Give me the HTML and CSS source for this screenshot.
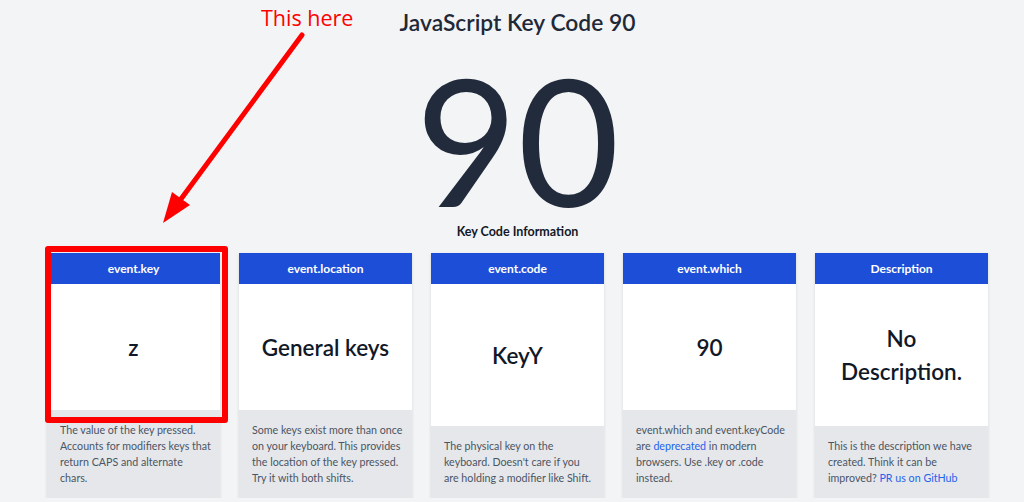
FILE: index.html
```html
<!DOCTYPE html>
<html lang="en">
<head>
  <meta charset="UTF-8" />
  <meta name="viewport" content="width=device-width, initial-scale=1" />
  <title>JavaScript Key Code 90</title>
  <link rel="stylesheet" href="styles.css">
</head>
<body>

<div class="page">
  <h1 class="title">JavaScript Key Code 90</h1>
  <div class="keycode">90</div>
  <h2 class="info-title">Key Code Information</h2>

  <div class="cards">
    <div class="card">
      <div class="card-head">event.key</div>
      <div class="card-value">z</div>
      <div class="card-desc">The value of the key pressed. Accounts for modifiers keys that return CAPS and alternate chars.</div>
    </div>
    <div class="card">
      <div class="card-head">event.location</div>
      <div class="card-value">General keys</div>
      <div class="card-desc">Some keys exist more than once on your keyboard. This provides the location of the key pressed. Try it with both shifts.</div>
    </div>
    <div class="card">
      <div class="card-head">event.code</div>
      <div class="card-value">KeyY</div>
      <div class="card-desc">The physical key on the keyboard. Doesn't care if you are holding a modifier like Shift.</div>
    </div>
    <div class="card">
      <div class="card-head">event.which</div>
      <div class="card-value">90</div>
      <div class="card-desc">event.which and event.keyCode are <a href="#">deprecated</a> in modern browsers. Use .key or .code instead.</div>
    </div>
    <div class="card">
      <div class="card-head">Description</div>
      <div class="card-value">No Description.</div>
      <div class="card-desc">This is the description we have created. Think it can be improved? <a href="#">PR us on GitHub</a></div>
    </div>
  </div>
</div>

<!-- screenshot annotation -->
<div class="note">This here</div>
<svg class="arrow" width="160" height="230" viewBox="0 0 160 230">
  <line x1="142" y1="35" x2="21" y2="199" stroke="#ff0000" stroke-width="5" stroke-linecap="round" />
  <polygon points="3,223 12,192 30,205" fill="#ff0000" />
</svg>
<div class="mark"></div>

</body>
</html>
```

FILE: styles.css
```css
body {
  margin: 0;
  background: #f3f4f6;
  color: #1f2937;
  font-family: Lato, "Open Sans", sans-serif;
  position: relative;
}

.page {
  width: 941px;
  margin-left: 47px;
  text-align: center;
}

.title {
  margin: 0;
  padding-top: 8px;
  font-size: 22.8px;
  font-weight: 600;
  line-height: 28px;
}

.keycode {
  font-size: 176px;
  font-weight: 400;
  line-height: 170px;
  color: #222b3b;
  margin-top: 18px;
}

.info-title {
  margin: 0;
  font-size: 12.5px;
  font-weight: 700;
  line-height: 16px;
  color: #111827;
}

.cards {
  display: grid;
  grid-template-columns: repeat(5, 173px);
  column-gap: 19px;
  margin-top: 13px;
}

.card {
  display: flex;
  flex-direction: column;
  background: #fff;
  box-shadow: 0 1px 3px rgba(0, 0, 0, 0.12);
}

.card-head {
  background: #1d4ed8;
  color: #fff;
  font-size: 12px;
  font-weight: 700;
  height: 31px;
  line-height: 31px;
}

.card-value {
  flex: 1;
  min-height: 126px;
  display: flex;
  align-items: center;
  justify-content: center;
  padding: 0 14px;
  font-size: 22.5px;
  font-weight: 600;
  line-height: 33px;
  color: #111827;
}

.card-desc {
  background: #e5e7eb;
  padding: 12px 8px 12px 13px;
  text-align: left;
  font-size: 10.7px;
  line-height: 16px;
  color: #4b5563;
}

.card-desc a {
  color: #2563eb;
  text-decoration: none;
}

.note {
  position: absolute;
  left: 261px;
  top: 3px;
  font-family: "Open Sans", sans-serif;
  font-size: 21.5px;
  color: #ff0000;
}

.arrow {
  position: absolute;
  left: 160px;
  top: 0;
}

.mark {
  position: absolute;
  left: 45px;
  top: 246px;
  width: 171px;
  height: 165px;
  border: 6px solid #ff0000;
  border-radius: 3px;
}
```
